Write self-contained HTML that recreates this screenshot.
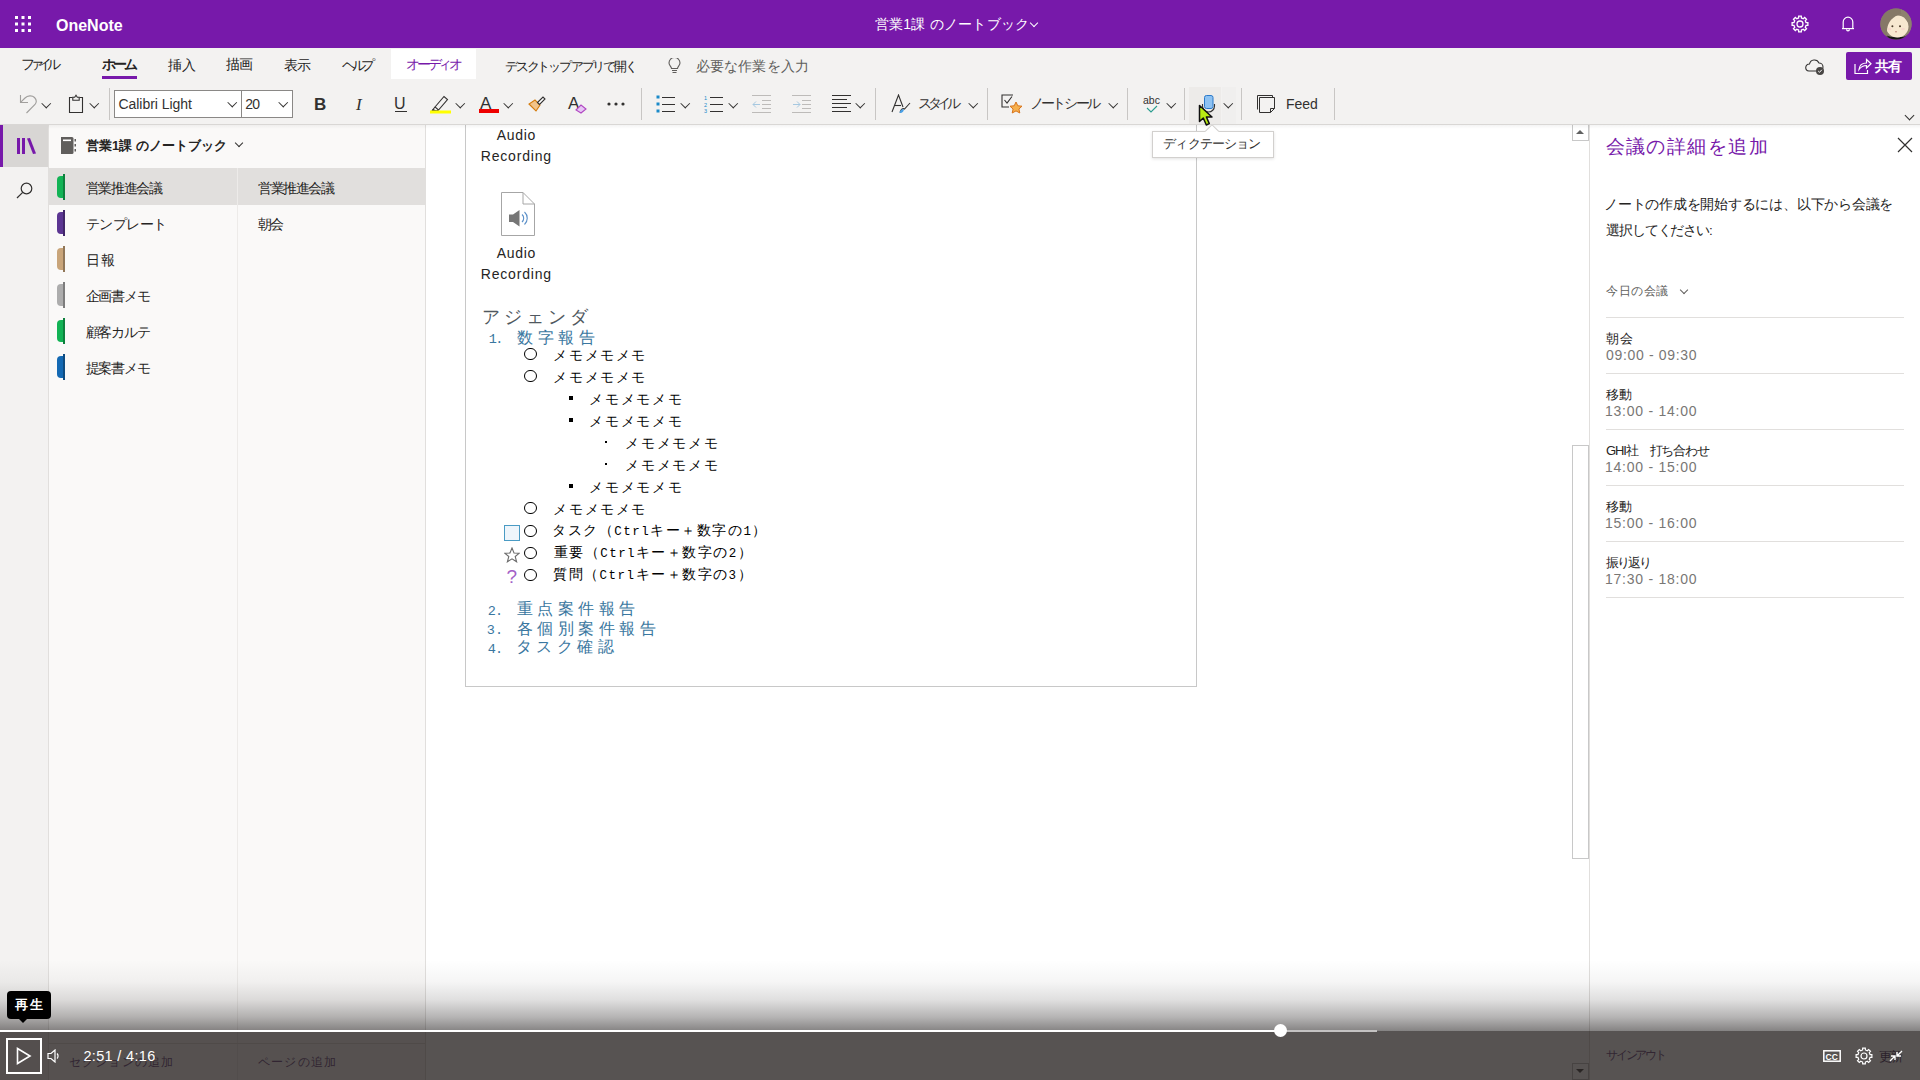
<!DOCTYPE html>
<html lang="ja">
<head>
<meta charset="utf-8">
<style>
*{margin:0;padding:0;box-sizing:border-box}
html,body{width:1920px;height:1080px;overflow:hidden;background:#fff;font-family:"Liberation Sans",sans-serif;color:#252423;font-feature-settings:"palt"}
.a{position:absolute}
.t{position:absolute;white-space:nowrap;line-height:1}
#top{left:0;top:0;width:1920px;height:48px;background:#7719aa}
#tabs{left:0;top:48px;width:1920px;height:76px;background:#f3f2f1}
#rbshadow{left:0;top:124px;width:1920px;height:1px;background:#e1dfdd}
#rail{left:0;top:124px;width:49px;height:956px;background:#f3f2f1;border-right:1px solid #e1dfdd}
#secs{left:49px;top:124px;width:377px;height:956px;background:#faf9f8;border-right:1px solid #e1dfdd}
#pages{left:237px;top:168px;width:189px;height:912px;background:#faf9f8;border-left:1px solid #edebe9;border-right:1px solid #e1dfdd}
#canvas{left:426px;top:124px;width:1163px;height:956px;background:#fff}
#panel{left:1589px;top:124px;width:331px;height:956px;background:#fff;border-left:1px solid #e1dfdd}
.sep{position:absolute;width:1px;height:32px;top:88px;background:#c8c6c4}
.chev{position:absolute;width:6.5px;height:6.5px;border-right:1.1px solid #323130;border-bottom:1.1px solid #323130;transform:rotate(45deg)}
.sec{position:absolute;left:48px;width:189px;height:36px}
.tab{position:absolute;left:9px;top:8px;width:7px;height:22px;border-radius:4px 0 0 4px}
.tab::after{content:"";position:absolute;left:6px;top:-2px;width:2px;height:26px;background:inherit;filter:brightness(0.72)}
.sectxt{position:absolute;left:37.5px;top:12.5px;font-size:14px;line-height:14px;color:#252423;white-space:nowrap}
.nt{font-size:14px;line-height:16px;color:#000}
.m{font-family:"Liberation Mono",monospace;font-size:12.5px}
</style>
</head>
<body>
<!-- top bar -->
<div id="top" class="a">
  <svg class="a" style="left:15px;top:16px" width="16" height="16" viewBox="0 0 16 16" fill="#fff">
    <rect x="0" y="0" width="3" height="3"/><rect x="6.5" y="0" width="3" height="3"/><rect x="13" y="0" width="3" height="3"/>
    <rect x="0" y="6.5" width="3" height="3"/><rect x="6.5" y="6.5" width="3" height="3"/><rect x="13" y="6.5" width="3" height="3"/>
    <rect x="0" y="13" width="3" height="3"/><rect x="6.5" y="13" width="3" height="3"/><rect x="13" y="13" width="3" height="3"/>
  </svg>
  <div class="t" style="left:56.00px;top:17.60px;font-size:16px;font-weight:bold;color:#fff;letter-spacing:0.00px">OneNote</div>
  <div class="t" style="left:874.61px;top:17.20px;font-size:14px;color:#fff;letter-spacing:0.27px">営業1課 のノートブック</div>
  <div class="chev" style="left:1031px;top:20px;border-color:#fff;width:6px;height:6px;border-width:0 1.1px 1.1px 0"></div>
  <svg class="a" style="left:1791px;top:15px" width="18" height="18" viewBox="0 0 18 18" fill="none" stroke="#fff" stroke-width="1.3">
    <path d="M15.04 7.60 L16.89 7.69 L16.89 10.31 L15.04 10.40 L14.26 12.28 L15.51 13.65 L13.65 15.51 L12.28 14.26 L10.40 15.04 L10.31 16.89 L7.69 16.89 L7.60 15.04 L5.72 14.26 L4.35 15.51 L2.49 13.65 L3.74 12.28 L2.96 10.40 L1.11 10.31 L1.11 7.69 L2.96 7.60 L3.74 5.72 L2.49 4.35 L4.35 2.49 L5.72 3.74 L7.60 2.96 L7.69 1.11 L10.31 1.11 L10.40 2.96 L12.28 3.74 L13.65 2.49 L15.51 4.35 L14.26 5.72 Z"/>
    <circle cx="9" cy="9" r="3"/>
  </svg>
  <svg class="a" style="left:1841px;top:16px" width="15" height="18" viewBox="0 0 15 18" fill="none" stroke="#fff" stroke-width="1.2">
    <path d="M2.2 12.5 V6 A4.8 4.8 0 0 1 11.8 6 V12.5"/><path d="M1 12.6 H13"/><path d="M5.6 13.2 A1.4 1.6 0 0 0 8.4 13.2"/>
  </svg>
  <svg class="a" style="left:1880px;top:7px" width="33" height="33" viewBox="0 0 33 33">
    <defs><clipPath id="cc"><circle cx="16" cy="17" r="15.6"/></clipPath></defs>
    <g clip-path="url(#cc)">
      <rect width="33" height="33" fill="#8d816f"/>
      <path d="M5 33 H28 V28 C25 31 10 31 6 28 Z" fill="#141414"/><ellipse cx="17.3" cy="19.5" rx="11.2" ry="11" fill="#f7e8d0"/>
      <path d="M0 0 H33 V6 C24 5 14 8 9.5 15 C7 19 6.5 24 7.5 30 L0 33 Z" fill="#857867"/>
      <path d="M21 6 C24 9 26 13 28.5 16 C29.5 20 29 24 27.5 27 L33 30 V0 H21 Z" fill="#8d816f"/>
      
      <circle cx="12.4" cy="19.3" r="1" fill="#4a3a2a"/><circle cx="20" cy="19.3" r="1" fill="#4a3a2a"/>
      <ellipse cx="16" cy="24.8" rx="1.1" ry="0.8" fill="#c9968a"/>
      <ellipse cx="9.5" cy="22" rx="2" ry="1.3" fill="#f6d9cc"/><ellipse cx="23" cy="22" rx="2" ry="1.3" fill="#f6d9cc"/>
    </g>
  </svg>

</div>

<div id="tabs" class="a">
  <div class="t" style="left:21.00px;top:9.88px;font-size:13.5px;color:#252423;letter-spacing:-5.33px">ファイル</div>
  <div class="t" style="left:102.00px;top:8.88px;font-size:14px;font-weight:bold;color:#252423;letter-spacing:-3.00px">ホーム</div>
  <div class="a" style="left:102px;top:27.5px;width:35px;height:3px;background:#7719aa"></div>
  <div class="t" style="left:168.00px;top:9.88px;font-size:14px;color:#252423;letter-spacing:0.00px">挿入</div>
  <div class="t" style="left:226.00px;top:9.38px;font-size:14px;color:#252423;letter-spacing:-1.00px">描画</div>
  <div class="t" style="left:284.00px;top:9.88px;font-size:14px;color:#252423;letter-spacing:-1.00px">表示</div>
  <div class="t" style="left:342.00px;top:10.88px;font-size:13.5px;color:#252423;letter-spacing:-4.50px">ヘルプ</div>
  <div class="a" style="left:391px;top:1px;width:85px;height:30px;background:#fff"></div>
  <div class="t" style="left:406.00px;top:9.88px;font-size:13.5px;color:#7719aa;letter-spacing:-3.25px">オーディオ</div>
  <div class="t" style="left:505.00px;top:12.00px;font-size:13px;color:#252423;letter-spacing:-2.25px">デスクトップ アプリで開く</div>
  <svg class="a" style="left:668px;top:10px" width="13" height="16" viewBox="0 0 13 16" fill="none" stroke="#605e5c" stroke-width="1.1">
    <path d="M3.5 10.5 C3.5 8.5 1 7.5 1 5 A5.5 5.5 0 0 1 12 5 C12 7.5 9.5 8.5 9.5 10.5 Z"/>
    <path d="M4 12.5 H9 M4.5 14.5 H8.5"/>
  </svg>
  <div class="t" style="left:695.61px;top:11.00px;font-size:14px;color:#605e5c;letter-spacing:0.18px">必要な作業を入力</div>
  <!-- right -->
  <svg class="a" style="left:1804px;top:10px" width="22" height="18" viewBox="0 0 22 18">
    <path d="M5 13 H15 A4 4 0 0 0 15 5 A5 5 0 0 0 5.5 6 A3.5 3.5 0 0 0 5 13 Z" fill="none" stroke="#323130" stroke-width="1.1"/>
    <circle cx="16" cy="13" r="4" fill="#484644"/>
    <path d="M14.2 13 L15.5 14.3 L17.8 11.8" fill="none" stroke="#fff" stroke-width="1"/>
  </svg>
  <div class="a" style="left:1846px;top:4px;width:66px;height:28px;background:#7719aa;border-radius:2px"></div>
  <svg class="a" style="left:1854px;top:9px" width="20" height="18" viewBox="0 0 20 18" fill="none" stroke="#fff" stroke-width="1.2">
    <path d="M1 7 V16.5 H13.5 V13"/><path d="M5 12.5 C5.5 8 8.5 6 12.5 6 V2.5 L17 6.8 L12.5 11 V8.5 C9.5 8.5 7 9.8 5 12.5 Z"/>
  </svg>
  <div class="t" style="left:1875.00px;top:11.00px;font-size:14px;font-weight:bold;color:#fff;letter-spacing:-1.00px">共有</div>
  <div class="chev" style="left:1906px;top:64px;width:7px;height:7px;border-width:0 1.2px 1.2px 0"></div>
</div>


<div id="toolbar" class="a" style="left:0;top:0;width:1920px;height:124px">
  <!-- undo -->
  <svg class="a" style="left:19px;top:94px" width="19" height="20" viewBox="0 0 19 20" fill="none" stroke="#a19f9d" stroke-width="1.1">
    <path d="M1.5 1 V8.5 H9"/><path d="M1.8 8.2 L6 4 C8.5 1.5 13 1 15.5 3.5 C17.5 5.5 17.5 8.5 16 10.5 L7.5 19"/>
  </svg>
  <div class="chev" style="left:43px;top:100px"></div>
  <!-- paste -->
  <svg class="a" style="left:68px;top:94px" width="16" height="20" viewBox="0 0 16 20" fill="none" stroke="#323130" stroke-width="1.1">
    <path d="M4.5 3.5 H1.5 V18.5 H14.5 V3.5 H11.5"/><path d="M4.8 6.3 H11.2 V3.3 H9.3 L8 1.3 L6.7 3.3 H4.8 Z"/>
  </svg>
  <div class="chev" style="left:91px;top:100px"></div>
  <div class="sep" style="left:109px"></div>
  <!-- font box -->
  <div class="a" style="left:114px;top:90px;width:179px;height:28px;background:#fff;border:1px solid #8a8886"></div>
  <div class="a" style="left:241px;top:90px;width:1px;height:28px;background:#8a8886"></div>
  <div class="t" style="left:118.41px;top:97.33px;font-size:14px;color:#323130;letter-spacing:-0.03px">Calibri Light</div>
  <div class="chev" style="left:229px;top:99px"></div>
  <div class="t" style="left:245.25px;top:96.88px;font-size:14px;color:#323130;letter-spacing:-0.70px">20</div>
  <div class="chev" style="left:280px;top:99px"></div>
  <!-- B I U -->
  <div class="t" style="left:314px;top:96px;font-size:17px;font-weight:bold;color:#323130">B</div>
  <div class="t" style="left:356px;top:96px;font-size:17px;font-style:italic;font-family:'Liberation Serif',serif;color:#323130">I</div>
  <div class="t" style="left:394px;top:96px;font-size:16px;color:#323130">U</div>
  <div class="a" style="left:395px;top:111px;width:12px;height:1px;background:#323130"></div>
  <!-- highlighter -->
  <svg class="a" style="left:429px;top:94px" width="22" height="20" viewBox="0 0 22 20" fill="none" stroke="#323130" stroke-width="1.1">
    <path d="M6 13 L15 2.5 L18.5 5.5 L9.5 16 Z"/><path d="M6 13 L4 15.5 L7 17 L9.5 16"/>
    <path d="M4 15.5 L3 17 H6" fill="#323130"/>
    <rect x="1" y="16.5" width="21" height="3" fill="#ffff00" stroke="none"/>
  </svg>
  <div class="chev" style="left:457px;top:100px"></div>
  <!-- font color -->
  <div class="t" style="left:480px;top:95px;font-size:17px;color:#323130">A</div>
  <div class="a" style="left:479px;top:109px;width:20px;height:4px;background:#e00"></div>
  <div class="chev" style="left:505px;top:100px"></div>
  <!-- format painter -->
  <svg class="a" style="left:528px;top:95px" width="19" height="18" viewBox="0 0 19 18">
    <path d="M1 9 L8 16 L12 10 L7 5 Z" fill="#f2c48a" stroke="#d47c0e" stroke-width="1.1"/>
    <path d="M9.5 7.5 L15 2 L17 4 L11.5 9.5 Z" fill="#fff" stroke="#323130" stroke-width="1.1"/>
  </svg>
  <!-- clear format -->
  <div class="t" style="left:568px;top:95px;font-size:17px;color:#323130">A</div>
  <svg class="a" style="left:575px;top:103px" width="13" height="11" viewBox="0 0 13 11">
    <path d="M1 7 L6 2 L11 6 L6 10 Z" fill="#e6c6f5" stroke="#b146c2" stroke-width="1.1"/>
  </svg>
  <!-- more -->
  <svg class="a" style="left:607px;top:102px" width="18" height="4" viewBox="0 0 18 4" fill="#323130">
    <circle cx="2" cy="2" r="1.6"/><circle cx="9" cy="2" r="1.6"/><circle cx="16" cy="2" r="1.6"/>
  </svg>
  <div class="sep" style="left:641px"></div>
  <!-- bullets -->
  <svg class="a" style="left:656px;top:95px" width="20" height="18" viewBox="0 0 20 18">
    <rect x="0.5" y="0.5" width="3" height="3" fill="#1a8ac9"/><rect x="0.5" y="7.5" width="3" height="3" fill="#1a8ac9"/><rect x="0.5" y="14.5" width="3" height="3" fill="#1a8ac9"/>
    <path d="M6 2.5 H19 M6 9.5 H19 M6 16.5 H19" stroke="#323130" stroke-width="1"/>
  </svg>
  <div class="chev" style="left:682px;top:100px"></div>
  <!-- numbering -->
  <svg class="a" style="left:704px;top:95px" width="20" height="18" viewBox="0 0 20 18">
    <text x="0" y="5" font-size="5.5" fill="#1a8ac9" font-family="Liberation Sans">1</text>
    <text x="0" y="11.5" font-size="5.5" fill="#1a8ac9" font-family="Liberation Sans">2</text>
    <text x="0" y="18" font-size="5.5" fill="#1a8ac9" font-family="Liberation Sans">3</text>
    <path d="M6 2.5 H19 M6 9.5 H19 M6 16.5 H19" stroke="#323130" stroke-width="1"/>
  </svg>
  <div class="chev" style="left:730px;top:100px"></div>
  <!-- outdent -->
  <svg class="a" style="left:752px;top:95px" width="20" height="18" viewBox="0 0 20 18" fill="none" stroke="#bdbbb9" stroke-width="1">
    <path d="M0 0.5 H19 M10 5.5 H19 M10 9.5 H19 M10 13.5 H19 M0 17.5 H19"/>
    <path d="M8 9.5 H1 M4 6.5 L1 9.5 L4 12.5" stroke="#a6c8e0"/>
  </svg>
  <!-- indent -->
  <svg class="a" style="left:792px;top:95px" width="20" height="18" viewBox="0 0 20 18" fill="none" stroke="#bdbbb9" stroke-width="1">
    <path d="M0 0.5 H19 M10 5.5 H19 M10 9.5 H19 M10 13.5 H19 M0 17.5 H19"/>
    <path d="M1 9.5 H8 M5 6.5 L8 9.5 L5 12.5" stroke="#a6c8e0"/>
  </svg>
  <!-- align -->
  <svg class="a" style="left:832px;top:95px" width="20" height="18" viewBox="0 0 20 18" fill="none" stroke="#323130" stroke-width="1">
    <path d="M0 0.5 H19 M0 4.5 H15 M0 8.5 H19 M0 12.5 H15 M0 16.5 H19"/>
  </svg>
  <div class="chev" style="left:857px;top:100px"></div>
  <div class="sep" style="left:875px"></div>
  <!-- styles -->
  <svg class="a" style="left:891px;top:94px" width="20" height="20" viewBox="0 0 20 20">
    <path d="M1 18 L7.5 1 L12 13" fill="none" stroke="#323130" stroke-width="1.1"/><path d="M3.5 11.5 H10" stroke="#323130" stroke-width="1.1"/>
    <path d="M9 18.5 C10 15 12 14 13.5 15 L19 9" fill="none" stroke="#323130" stroke-width="1.1"/>
    <path d="M8.5 19 C9 16 11 14.5 13 15.5 C12.5 18 11 19.5 8.5 19 Z" fill="#4aa0e6"/>
  </svg>
  <div class="t" style="left:918.00px;top:97.00px;font-size:13.5px;color:#323130;letter-spacing:-4.30px">スタイル</div>
  <div class="chev" style="left:970px;top:100px"></div>
  <div class="sep" style="left:987px"></div>
  <!-- note tags -->
  <svg class="a" style="left:1001px;top:94px" width="22" height="20" viewBox="0 0 22 20">
    <path d="M12 1 H1 V13 H8" fill="none" stroke="#323130" stroke-width="1.1"/>
    <path d="M3.5 6 L6 9 L11 2.5" fill="none" stroke="#323130" stroke-width="1.1"/>
    <path d="M15 8 L16.8 11.8 L21 12.2 L17.9 15 L18.8 19 L15 16.9 L11.2 19 L12.1 15 L9 12.2 L13.2 11.8 Z" fill="#f6b04d" stroke="#d8741a" stroke-width="1"/>
  </svg>
  <div class="t" style="left:1030.00px;top:97.00px;font-size:13.5px;color:#323130;letter-spacing:-2.83px">ノート シール</div>
  <div class="chev" style="left:1110px;top:100px"></div>
  <div class="sep" style="left:1127px"></div>
  <!-- spelling -->
  <div class="t" style="left:1143px;top:95px;font-size:10.5px;color:#323130">abc</div>
  <svg class="a" style="left:1146px;top:105px" width="12" height="8" viewBox="0 0 12 8" fill="none" stroke="#2a9d8f" stroke-width="1.1"><path d="M1 3 L5 7 L11 1"/></svg>
  <div class="chev" style="left:1168px;top:100px"></div>
  <div class="sep" style="left:1184px"></div>
  <!-- dictate (hover) -->
  <div class="a" style="left:1189px;top:87px;width:32px;height:37px;background:#edebe9"></div>
  <div class="a" style="left:1222px;top:87px;width:14px;height:37px;background:#f0efee"></div>
  <svg class="a" style="left:1201px;top:94px" width="16" height="20" viewBox="0 0 16 20">
    <rect x="3.5" y="1.5" width="8.5" height="13" rx="2" fill="#8ec2f2" stroke="#2b79c9" stroke-width="1"/>
    <path d="M1.5 10 V12 A6 6 0 0 0 13.5 12 V10" fill="none" stroke="#323130" stroke-width="1.1"/>
  </svg>
  <div class="chev" style="left:1225px;top:100px"></div>
  <div class="sep" style="left:1241px"></div>
  <!-- feed -->
  <svg class="a" style="left:1256px;top:94px" width="20" height="20" viewBox="0 0 20 20" fill="none" stroke="#323130" stroke-width="1">
    <path d="M1.5 15.5 V1.5 H16.5 V3.5"/><path d="M3.5 3.5 H18.5 V14.5 L14.5 18.5 H3.5 Z"/><path d="M14.5 18.5 V14.5 H18.5"/>
  </svg>
  <div class="t" style="left:1286px;top:97px;font-size:14px;color:#323130">Feed</div>
  <div class="sep" style="left:1334px"></div>
</div>



<div id="rail" class="a">
  <div class="a" style="left:0;top:0;width:48px;height:43px;background:#d8d6d4"></div>
  <div class="a" style="left:0;top:0;width:3px;height:43px;background:#7719aa"></div>
  <svg class="a" style="left:17px;top:14px" width="19" height="16" viewBox="0 0 19 16" fill="#7719aa">
    <rect x="0" y="0" width="3" height="16"/><rect x="5" y="0" width="3" height="16"/>
    <path d="M10 0.5 L13 0 L19 15.5 L16 16 Z"/>
  </svg>
  <svg class="a" style="left:16px;top:58px" width="17" height="17" viewBox="0 0 17 17" fill="none" stroke="#323130" stroke-width="1.2">
    <circle cx="10.5" cy="6.5" r="5.3"/><path d="M6.7 10.3 L1 16"/>
  </svg>
</div>
<div id="secs" class="a">
  <svg class="a" style="left:11px;top:13px" width="16" height="17" viewBox="0 0 16 17">
    <path d="M1 0 H12 A1.5 1.5 0 0 1 13.5 1.5 V15.5 A1.5 1.5 0 0 1 12 17 H1 Z" fill="#605e5c"/>
    <rect x="3" y="2.5" width="8" height="1.6" fill="#fff"/>
    <rect x="14.5" y="2" width="1.5" height="2.5" fill="#605e5c"/><rect x="14.5" y="7" width="1.5" height="2.5" fill="#605e5c"/><rect x="14.5" y="12" width="1.5" height="2.5" fill="#605e5c"/>
  </svg>
  <div class="t" style="left:37.00px;top:14.50px;font-size:13px;font-weight:bold;color:#252423;letter-spacing:0.00px">営業1課 のノートブック</div>
  <div class="chev" style="left:187px;top:16px;width:6px;height:6px;border-width:0 1.1px 1.1px 0"></div>
</div>
<div id="pages" class="a"></div>
<div class="a" style="left:48px;top:168px;width:377px;height:37px;background:#e1dfdd"></div>
<div class="a" style="left:237px;top:168px;width:1px;height:912px;background:#edebe9"></div>
<div class="sec" style="top:168px"><div class="tab" style="background:#12b355"></div><div class="sectxt" style="letter-spacing:-1.28px">営業推進会議</div></div>
<div class="sec" style="top:204px"><div class="tab" style="background:#5c3692"></div><div class="sectxt" style="letter-spacing:-0.48px">テンプレート</div></div>
<div class="sec" style="top:240px"><div class="tab" style="background:#c9a57a"></div><div class="sectxt" style="letter-spacing:1.20px">日報</div></div>
<div class="sec" style="top:276px"><div class="tab" style="background:#adadad"></div><div class="sectxt" style="letter-spacing:-1.06px">企画書メモ</div></div>
<div class="sec" style="top:312px"><div class="tab" style="background:#12b355"></div><div class="sectxt" style="letter-spacing:-1.06px">顧客カルテ</div></div>
<div class="sec" style="top:348px"><div class="tab" style="background:#1469b3"></div><div class="sectxt" style="letter-spacing:-1.06px">提案書メモ</div></div>
<div class="t" style="left:258.00px;top:180.50px;font-size:14px;color:#252423;letter-spacing:-1.40px">営業推進会議</div>
<div class="t" style="left:258.00px;top:216.50px;font-size:14px;color:#252423;letter-spacing:-1.80px">朝会</div>


<div id="canvas" class="a"></div>
<div class="a" style="left:465px;top:124px;width:732px;height:563px;border:1px solid #c8c8c8;border-top:none"></div>
<div class="t" style="left:496.71px;top:127.50px;font-size:14px;color:#252423;letter-spacing:0.69px">Audio</div>
<div class="t" style="left:480.71px;top:149.36px;font-size:14px;color:#252423;letter-spacing:0.82px">Recording</div>
<svg class="a" style="left:500px;top:191px" width="36" height="46" viewBox="0 0 36 46">
  <path d="M1.5 1.5 H23 L34.5 13 V44.5 H1.5 Z" fill="#fff" stroke="#a6a6a6" stroke-width="1"/>
  <path d="M23 1.5 V13 H34.5" fill="none" stroke="#a6a6a6" stroke-width="1"/>
  <path d="M9 23.5 H13 L19.5 19 V35.5 L13 31 H9 Z" fill="#767676"/>
  <path d="M22 23.5 A5 5 0 0 1 22 31 M24.5 21 A8.5 8.5 0 0 1 24.5 33.5" fill="none" stroke="#5a8fc8" stroke-width="1.1"/>
</svg>
<div class="t" style="left:496.71px;top:245.75px;font-size:14px;color:#252423;letter-spacing:0.69px">Audio</div>
<div class="t" style="left:480.71px;top:266.50px;font-size:14px;color:#252423;letter-spacing:0.82px">Recording</div>
<div class="t" style="left:481.50px;top:307.91px;font-size:18px;color:#505860;letter-spacing:4.00px">アジェンダ</div>
<div class="t" style="left:488.75px;top:332.88px;font-size:13.5px;font-family:'Liberation Mono',monospace;color:#3a77a0;letter-spacing:-1.50px">1.</div>
<div class="t" style="left:517.00px;top:330.25px;font-size:15.5px;color:#3a77a0;letter-spacing:4.67px">数字報告</div>
<div class="a" style="left:524.25px;top:347.75px;width:12.5px;height:12.5px;border:1.2px solid #000;border-radius:50%"></div>
<div class="t nt" style="left:553.41px;top:346.50px;letter-spacing:1.56px">メモメモメモ</div>
<div class="a" style="left:524.25px;top:369.75px;width:12.5px;height:12.5px;border:1.2px solid #000;border-radius:50%"></div>
<div class="t nt" style="left:553.41px;top:368.50px;letter-spacing:1.56px">メモメモメモ</div>
<div class="a" style="left:569px;top:396px;width:4px;height:4px;background:#000"></div>
<div class="t nt" style="left:589.00px;top:390.50px;letter-spacing:1.80px">メモメモメモ</div>
<div class="a" style="left:569px;top:418px;width:4px;height:4px;background:#000"></div>
<div class="t nt" style="left:589.00px;top:412.50px;letter-spacing:1.80px">メモメモメモ</div>
<div class="a" style="left:605px;top:441px;width:2px;height:2px;background:#000"></div>
<div class="t nt" style="left:625.00px;top:434.50px;letter-spacing:1.80px">メモメモメモ</div>
<div class="a" style="left:605px;top:463px;width:2px;height:2px;background:#000"></div>
<div class="t nt" style="left:625.00px;top:456.50px;letter-spacing:1.80px">メモメモメモ</div>
<div class="a" style="left:569px;top:484px;width:4px;height:4px;background:#000"></div>
<div class="t nt" style="left:589.00px;top:478.50px;letter-spacing:1.80px">メモメモメモ</div>
<div class="a" style="left:524.25px;top:501.75px;width:12.5px;height:12.5px;border:1.2px solid #000;border-radius:50%"></div>
<div class="t nt" style="left:553.41px;top:500.50px;letter-spacing:1.56px">メモメモメモ</div>
<div class="a" style="left:524.25px;top:524.75px;width:12.5px;height:12.5px;border:1.2px solid #000;border-radius:50%"></div>
<div class="t nt" style="left:552.00px;top:522.21px;letter-spacing:1.53px">タスク（<span class="m">Ctrl</span>キー＋数字の<span class="m">1</span>）</div>
<div class="a" style="left:524.25px;top:546.75px;width:12.5px;height:12.5px;border:1.2px solid #000;border-radius:50%"></div>
<div class="t nt" style="left:554.00px;top:543.88px;letter-spacing:1.43px">重要（<span class="m">Ctrl</span>キー＋数字の<span class="m">2</span>）</div>
<div class="a" style="left:524.25px;top:568.75px;width:12.5px;height:12.5px;border:1.2px solid #000;border-radius:50%"></div>
<div class="t nt" style="left:553.00px;top:566.00px;letter-spacing:1.50px">質問（<span class="m">Ctrl</span>キー＋数字の<span class="m">3</span>）</div>
<div class="a" style="left:504px;top:525px;width:16px;height:16px;border:1.3px solid #4a9bc4;background:#eef5fb"></div>
<svg class="a" style="left:504px;top:547px" width="16" height="16" viewBox="0 0 16 16"><path d="M8 1 L10 6 L15.3 6.2 L11.2 9.5 L12.6 14.8 L8 11.8 L3.4 14.8 L4.8 9.5 L0.7 6.2 L6 6 Z" fill="none" stroke="#6b6b6b" stroke-width="1.1"/></svg>
<div class="t" style="left:506.50px;top:567.25px;font-size:19px;color:#a35fc7;letter-spacing:0.00px">?</div>

<div class="t" style="left:487.80px;top:604.80px;font-size:13.5px;font-family:'Liberation Mono',monospace;color:#3a77a0;letter-spacing:-1.00px">2.</div>
<div class="t" style="left:516.71px;top:601.30px;font-size:15.5px;color:#3a77a0;letter-spacing:4.48px">重点案件報告</div>
<div class="t" style="left:486.80px;top:623.58px;font-size:13.5px;font-family:'Liberation Mono',monospace;color:#3a77a0;letter-spacing:0.00px">3.</div>
<div class="t" style="left:516.71px;top:620.86px;font-size:15.5px;color:#3a77a0;letter-spacing:4.49px">各個別案件報告</div>
<div class="t" style="left:487.80px;top:643.36px;font-size:13.5px;font-family:'Liberation Mono',monospace;color:#3a77a0;letter-spacing:-1.00px">4.</div>
<div class="t" style="left:516.00px;top:639.11px;font-size:15.5px;color:#3a77a0;letter-spacing:4.45px">タスク確認</div>
<!-- canvas scrollbar -->
<div class="a" style="left:1572px;top:124px;width:17px;height:17px;border:1px solid #c8c8c8;background:#fff"></div>
<div class="a" style="left:1576px;top:130px;width:0;height:0;border-left:4px solid transparent;border-right:4px solid transparent;border-bottom:4px solid #606060"></div>
<div class="a" style="left:1572px;top:445px;width:17px;height:414px;border:1px solid #c8c8c8;background:#fff"></div>
<div class="a" style="left:1572px;top:1063px;width:17px;height:17px;border:1px solid #c8c8c8;background:#fff"></div>
<div class="a" style="left:1576px;top:1069px;width:0;height:0;border-left:4px solid transparent;border-right:4px solid transparent;border-top:4px solid #606060"></div>


<div id="panel" class="a"></div>
<div class="t" style="left:1605.61px;top:138.16px;font-size:18.5px;color:#7719aa;letter-spacing:1.43px">会議の詳細を追加</div>
<svg class="a" style="left:1897px;top:137px" width="16" height="16" viewBox="0 0 16 16" stroke="#323130" stroke-width="1.2"><path d="M1 1 L15 15 M15 1 L1 15"/></svg>
<div class="t" style="left:1604.00px;top:198.21px;font-size:13.5px;color:#252423;letter-spacing:-0.23px">ノートの作成を開始するには、以下から会議を</div>
<div class="t" style="left:1606.00px;top:223.50px;font-size:13.5px;color:#252423;letter-spacing:-1.12px">選択してください:</div>
<div class="t" style="left:1606.00px;top:285.11px;font-size:12px;color:#605e5c;letter-spacing:0.50px">今日の会議</div>
<div class="chev" style="left:1681px;top:287px;width:6px;height:6px;border-width:0 1.1px 1.1px 0;border-color:#605e5c"></div>
<div class="a" style="left:1606px;top:317px;width:298px;height:1px;background:#e1dfdd"></div>
<div class="t" style="left:1606.00px;top:331.55px;font-size:13px;color:#252423;letter-spacing:0.60px">朝会</div>
<div class="t" style="left:1606.00px;top:348.41px;font-size:14px;color:#797775;letter-spacing:0.66px">09:00 - 09:30</div>
<div class="a" style="left:1606px;top:373px;width:298px;height:1px;background:#e1dfdd"></div>
<div class="t" style="left:1606.00px;top:387.50px;font-size:13px;color:#252423;letter-spacing:-0.40px">移動</div>
<div class="t" style="left:1605.00px;top:404.21px;font-size:14px;color:#797775;letter-spacing:0.75px">13:00 - 14:00</div>
<div class="a" style="left:1606px;top:429px;width:298px;height:1px;background:#e1dfdd"></div>
<div class="t" style="left:1606.00px;top:444.00px;font-size:13px;color:#252423;letter-spacing:-1.11px">GHI社　打ち合わせ</div>
<div class="t" style="left:1605.00px;top:460.21px;font-size:14px;color:#797775;letter-spacing:0.75px">14:00 - 15:00</div>
<div class="a" style="left:1606px;top:485px;width:298px;height:1px;background:#e1dfdd"></div>
<div class="t" style="left:1606.00px;top:499.50px;font-size:13px;color:#252423;letter-spacing:-0.40px">移動</div>
<div class="t" style="left:1605.00px;top:516.21px;font-size:14px;color:#797775;letter-spacing:0.75px">15:00 - 16:00</div>
<div class="a" style="left:1606px;top:541px;width:298px;height:1px;background:#e1dfdd"></div>
<div class="t" style="left:1606.00px;top:556.00px;font-size:13px;color:#252423;letter-spacing:-1.88px">振り返り</div>
<div class="t" style="left:1605.00px;top:572.21px;font-size:14px;color:#797775;letter-spacing:0.75px">17:30 - 18:00</div>
<div class="a" style="left:1606px;top:597px;width:298px;height:1px;background:#e1dfdd"></div>


<div class="a" style="left:0;top:124px;width:1920px;height:1px;background:#d9d7d5"></div>
<div class="a" style="left:48px;top:125px;width:1872px;height:4px;background:linear-gradient(to bottom,rgba(0,0,0,0.045),rgba(0,0,0,0))"></div>
<!-- tooltip dictation -->
<div class="a" style="left:1152px;top:131px;width:122px;height:27px;background:#fff;border:1px solid #d2d0ce;box-shadow:0 1px 3px rgba(0,0,0,0.12)"></div>
<div class="a" style="left:1207px;top:126px;width:10px;height:10px;background:#fff;border-left:1px solid #d2d0ce;border-top:1px solid #d2d0ce;transform:rotate(45deg)"></div>
<div class="t" style="left:1163.41px;top:137.21px;font-size:13px;color:#323130;letter-spacing:-0.94px">ディクテーション</div>
<!-- cursor -->
<svg class="a" style="left:1198px;top:104px" width="18" height="23" viewBox="0 0 18 23">
  <path d="M1.5 1.5 L1.5 17.5 L5.3 14 L8.3 21 L11.3 19.6 L8.4 13 L14 13 Z" fill="#b9ec12" stroke="#101010" stroke-width="1.5" stroke-linejoin="round"/>
</svg>
<!-- bottom of onenote under overlay -->
<div class="a" style="left:48px;top:1043px;width:377px;height:1px;background:#e1dfdd"></div>
<div class="t" style="left:68.80px;top:1056.05px;font-size:12px;color:#7d5f8f;letter-spacing:1.19px">セクションの追加</div>
<div class="t" style="left:257.50px;top:1056.25px;font-size:12px;color:#7d5f8f;letter-spacing:1.40px">ページの追加</div>
<div class="t" style="left:1606.00px;top:1050.30px;font-size:11.5px;color:#7d5f8f;letter-spacing:-2.20px">サインアウト</div>
<!-- video overlay -->
<div class="a" style="left:0;top:960px;width:1920px;height:71px;background:linear-gradient(to bottom,rgba(12,8,8,0) 0px,rgba(12,8,8,0.04) 22px,rgba(12,8,8,0.13) 40px,rgba(12,8,8,0.3) 57px,rgba(12,8,8,0.5) 71px)"></div>
<div class="a" style="left:0;top:1031px;width:1920px;height:49px;background:rgba(20,14,12,0.715)"></div>
<div class="a" style="left:0;top:1029.5px;width:1280px;height:2.5px;background:#fff"></div>
<div class="a" style="left:1280px;top:1029.5px;width:97px;height:2.5px;background:#c4c2c2"></div>
<div class="a" style="left:1274px;top:1024px;width:13px;height:13px;border-radius:50%;background:#fff"></div>
<div class="a" style="left:6px;top:1038px;width:36px;height:36px;border:2px solid #fff"></div>
<svg class="a" style="left:16px;top:1047px" width="16" height="18" viewBox="0 0 16 18" fill="none" stroke="#fff" stroke-width="1.6"><path d="M1.5 1.5 L14 9 L1.5 16.5 Z"/></svg>
<svg class="a" style="left:47px;top:1049px" width="13" height="14" viewBox="0 0 13 14" fill="none" stroke="#fff" stroke-width="1.2"><path d="M1 4.5 H4 L8 1 V13 L4 9.5 H1 Z"/><path d="M10 4.5 A3.5 3.5 0 0 1 10 9.5"/></svg>
<div class="t" style="left:83.41px;top:1049.25px;font-size:14.5px;color:#fff;letter-spacing:0.34px">2:51 / 4:16</div>
<div class="a" style="left:7px;top:991px;width:44px;height:28px;background:#000;border-radius:4px"></div>
<div class="a" style="left:18.5px;top:1018.5px;width:0;height:0;border-left:4px solid transparent;border-right:4px solid transparent;border-top:4px solid #000"></div>
<div class="t" style="left:15.20px;top:998.50px;font-size:12.5px;color:#fff;font-weight:bold;letter-spacing:1.40px">再生</div>
<svg class="a" style="left:1823px;top:1050px" width="18" height="12" viewBox="0 0 18 12"><rect x="0.8" y="0.8" width="16.4" height="10.4" fill="none" stroke="#fff" stroke-width="1.5"/><text x="2.5" y="9.5" font-size="8.5" font-weight="bold" fill="#fff" font-family="Liberation Sans">CC</text></svg>
<svg class="a" style="left:1855px;top:1047px" width="18" height="18" viewBox="0 0 18 18" fill="none" stroke="#fff" stroke-width="1.2">
  <path d="M15.04 7.60 L16.89 7.69 L16.89 10.31 L15.04 10.40 L14.26 12.28 L15.51 13.65 L13.65 15.51 L12.28 14.26 L10.40 15.04 L10.31 16.89 L7.69 16.89 L7.60 15.04 L5.72 14.26 L4.35 15.51 L2.49 13.65 L3.74 12.28 L2.96 10.40 L1.11 10.31 L1.11 7.69 L2.96 7.60 L3.74 5.72 L2.49 4.35 L4.35 2.49 L5.72 3.74 L7.60 2.96 L7.69 1.11 L10.31 1.11 L10.40 2.96 L12.28 3.74 L13.65 2.49 L15.51 4.35 L14.26 5.72 Z"/>
  <circle cx="9" cy="9" r="3"/>
</svg>
<div class="t" style="left:1879.00px;top:1050.50px;font-size:12.5px;color:#2a1f2a;letter-spacing:-2.00px">更新</div>
<svg class="a" style="left:1889px;top:1050px" width="14" height="12" viewBox="0 0 14 12" fill="none" stroke="#fff" stroke-width="1.4"><path d="M1 11 L6 6 M2 6 H6 V10 M13 1 L8 6 M8 2 V6 H12"/></svg>
</body>
</html>
